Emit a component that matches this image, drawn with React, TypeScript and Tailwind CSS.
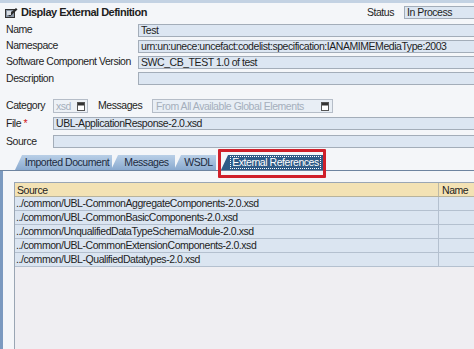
import React from "react";

const font = { fontFamily: '"Liberation Sans", Arial, sans-serif' };

function DropIcon() {
  return (
    <svg width="8" height="9" viewBox="0 0 8 9" className="shrink-0">
      <rect x="0.5" y="0.5" width="7" height="8" fill="#fff" stroke="#555" />
      <rect x="1" y="1" width="6" height="2.5" fill="#333" />
    </svg>
  );
}

function FormRow({ label, value, h = "h-[16px]" }: { label: string; value?: string; h?: string }) {
  return (
    <div className={`flex items-center ${h} shrink-0`}>
      <div className="w-[138px] pl-[6px] shrink-0 whitespace-nowrap">{label}</div>
      <div className="flex-1 h-[13px] bg-[#dce6f2] border border-[#a3adb9] border-r-0 pl-[2px] leading-[11px] whitespace-nowrap overflow-hidden">
        {value}
      </div>
    </div>
  );
}

function Tab({ label, active, w }: { label: string; active?: boolean; w: string }) {
  return (
    <div
      className={`relative h-[15px] ${w} shrink-0 flex items-center justify-center pl-[7px] [clip-path:polygon(7px_0,100%_0,100%_100%,0_100%)] ${
        active
          ? "bg-[#2f5b87] text-white"
          : "bg-gradient-to-b from-[#b9cfe7] to-[#8aaacf] text-[#1c2b40]"
      }`}
    >
      {active ? (
        <span className="outline-1 outline-dotted outline-white px-[1px] leading-[11px] whitespace-nowrap">{label}</span>
      ) : (
        <span className="leading-[11px] whitespace-nowrap">{label}</span>
      )}
    </div>
  );
}

const rows = [
  "../common/UBL-CommonAggregateComponents-2.0.xsd",
  "../common/UBL-CommonBasicComponents-2.0.xsd",
  "../common/UnqualifiedDataTypeSchemaModule-2.0.xsd",
  "../common/UBL-CommonExtensionComponents-2.0.xsd",
  "../common/UBL-QualifiedDatatypes-2.0.xsd",
];

export default function App() {
  return (
    <div
      style={font}
      className="w-[474px] h-[349px] overflow-hidden bg-[#f4f6f9] text-[10.5px] tracking-[-0.45px] text-[#1e1e1e] flex flex-col"
    >
      <div className="h-[3px] bg-[#c3d2e3] shrink-0" />

      {/* header */}
      <div className="flex items-center h-[19px] shrink-0">
        <div className="flex items-center pl-[5px] gap-[3px] flex-1">
          <svg width="13" height="11" viewBox="0 0 13 11">
            <rect x="0.5" y="2.5" width="9" height="8" fill="#8a96a6" stroke="#333" />
            <path d="M3 8 L11 1 L12.5 2.5 L5 9.5 Z" fill="#2a2a2a" />
            <rect x="2" y="4" width="4" height="4" fill="#d8dde4" />
          </svg>
          <span className="font-bold text-[11px] tracking-[-0.5px]">Display External Definition</span>
        </div>
        <span className="mr-[10px]">Status</span>
        <div className="w-[70px] h-[13px] bg-[#dce6f2] border border-[#a3adb9] border-r-0 pl-[2px] leading-[11px]">
          In Process
        </div>
      </div>

      <FormRow label="Name" value="Test" />
      <FormRow label="Namespace" value="urn:un:unece:uncefact:codelist:specification:IANAMIMEMediaType:2003" />
      <FormRow label="Software Component Version" value="SWC_CB_TEST 1.0 of test" />
      <FormRow label="Description" h="h-[17px]" />

      {/* category row */}
      <div className="flex items-center h-[18px] mt-[10px] shrink-0">
        <div className="w-[53px] pl-[6px]">Category</div>
        <div className="w-[35px] h-[14px] bg-[#edf1f6] border border-[#b5bdc8] flex items-center justify-between px-[2px] text-[#a5afbc]">
          <span className="leading-[11px]">xsd</span>
          <DropIcon />
        </div>
        <div className="ml-[10px] w-[54px]">Messages</div>
        <div className="w-[181px] h-[14px] bg-[#e8eef5] border border-[#b5bdc8] flex items-center justify-between px-[3px] text-[#a5afbc]">
          <span className="leading-[11px] whitespace-nowrap">From All Available Global Elements</span>
          <DropIcon />
        </div>
      </div>

      <div className="flex items-center h-[17px] shrink-0">
        <div className="w-[53px] pl-[6px]">
          File <span className="text-[#d02020]">*</span>
        </div>
        <div className="flex-1 h-[13px] bg-[#dce6f2] border border-[#a3adb9] border-r-0 pl-[2px] leading-[11px]">
          UBL-ApplicationResponse-2.0.xsd
        </div>
      </div>
      <div className="flex items-center h-[19px] shrink-0">
        <div className="w-[53px] pl-[6px]">Source</div>
        <div className="flex-1 h-[13px] bg-[#dce6f2] border border-[#a3adb9] border-r-0" />
      </div>

      {/* tabs */}
      <div className="flex items-end h-[16px] mt-[4px] pl-[15px] shrink-0 border-b border-[#6d84a0]">
        <Tab label="Imported Document" w="w-[97px]" />
        <Tab label="Messages" w="w-[64px] -ml-[1px]" />
        <Tab label="WSDL" w="w-[42px] -ml-[1px]" />
        <div className="relative ml-[5px]">
          <Tab label="External References" w="w-[102px]" active />
          <div className="absolute -left-[3px] -right-[3px] -top-[6px] -bottom-[8px] border-[3px] border-[#d0202a] rounded-[1px]" />
        </div>
      </div>

      {/* content */}
      <div className="flex flex-1 min-h-0">
        <div className="w-[3px] bg-[#7b9ac0] shrink-0" />
        <div className="flex-1 pl-[11px] pt-[11px] flex flex-col">
          <div className="flex-1 border-l border-t border-[#9aa6b4] bg-[#efeef2] flex flex-col">
            <div className="flex h-[14px] bg-[#f3e2b4] border-b border-[#b8b39c] shrink-0">
              <div className="w-[424px] pl-[2px] border-r border-[#bcb8a6] leading-[14px]">Source</div>
              <div className="flex-1 pl-[3px] leading-[14px]">Name</div>
            </div>
            {rows.map((r) => (
              <div key={r} className="flex h-[14px] bg-[#dbe5f1] border-b border-[#b4c0cf] shrink-0">
                <div className="w-[424px] pl-[1px] border-r border-[#b4c0cf] leading-[13px] whitespace-nowrap">{r}</div>
                <div className="flex-1" />
              </div>
            ))}
          </div>
        </div>
      </div>
    </div>
  );
}
